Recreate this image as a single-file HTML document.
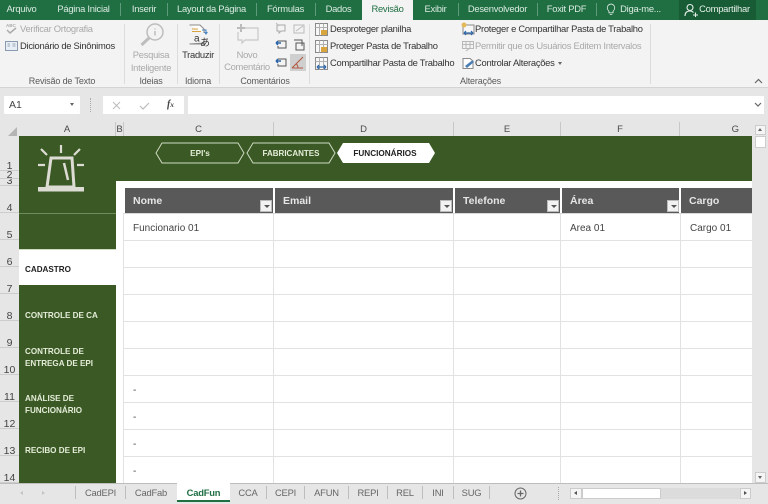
<!DOCTYPE html>
<html><head><meta charset="utf-8">
<style>
html,body{margin:0;padding:0;width:768px;height:504px;overflow:hidden;background:#e6e6e6;font-family:"Liberation Sans",sans-serif}
.a{position:absolute;white-space:nowrap}
.t{position:absolute;top:0;height:20px;line-height:18px;font-size:9.4px;letter-spacing:-.25px;color:#dcebe2;text-align:center;white-space:nowrap}
.sep{position:absolute;top:3px;height:13px;width:1px;background:#5f9a7a}
.r{position:absolute;font-size:9.4px;letter-spacing:-.27px;color:#333;white-space:nowrap;line-height:12px}
.g{color:#a9a9a9}
.lbl{position:absolute;top:75px;font-size:9px;letter-spacing:-.15px;color:#5a5a5a;white-space:nowrap;text-align:center;line-height:12px}
.vs{position:absolute;top:24px;height:60px;width:1px;background:#dcdcdc}
.ch{position:absolute;top:122px;height:14px;line-height:15px;font-size:9.5px;color:#4a4a4a;text-align:center;border-right:1px solid #c8c8c8;box-sizing:border-box}
.rh{position:absolute;left:0;width:19px;font-size:10.5px;color:#444;text-align:center;border-bottom:1px solid #cdcdcd;box-sizing:border-box}
.hl{position:absolute;left:124px;width:628px;height:1px;background:#e2e2e2}
.vl{position:absolute;top:213px;height:270px;width:1px;background:#e2e2e2}
.hd{position:absolute;top:188px;height:25px;background:#595959;color:#e6e6e6;font:bold 10.5px/26px "Liberation Sans",sans-serif;box-sizing:border-box;padding-left:8px;white-space:nowrap;overflow:hidden}
.fb{position:absolute;top:200px;width:12px;height:12px;background:#f2f2f2;border:1px solid #bbb;box-sizing:border-box}
.fb:after{content:"";position:absolute;left:2.5px;top:4px;border:3px solid transparent;border-top:3.5px solid #555;border-bottom:0}
.cell{position:absolute;font:10px/14px "Liberation Sans",sans-serif;color:#444;white-space:nowrap}
.m{position:absolute;left:25px;font:bold 8.1px/12px "Liberation Sans",sans-serif;color:#e4ecd8;white-space:nowrap}
.st{position:absolute;top:483px;height:19px;line-height:20px;font-size:9.4px;letter-spacing:-.2px;color:#666;text-align:center;white-space:nowrap}
.ss{position:absolute;top:486px;height:13px;width:1px;background:#bdbdbd}
</style></head><body>
<div style="position:relative;width:768px;height:504px;overflow:hidden">

<!-- top tabs -->
<div class="a" style="left:0;top:0;width:768px;height:20px;background:#1f6f43"></div>
<div class="t" style="left:0;width:43px">Arquivo</div>
<div class="t" style="left:50px;width:67px">Página Inicial</div><div class="sep" style="left:120px"></div>
<div class="t" style="left:121px;width:46px">Inserir</div><div class="sep" style="left:167px"></div>
<div class="t" style="left:167px;width:89px">Layout da Página</div><div class="sep" style="left:256px"></div>
<div class="t" style="left:256px;width:59px">Fórmulas</div><div class="sep" style="left:315px"></div>
<div class="t" style="left:315px;width:47px">Dados</div>
<div class="a" style="left:362px;top:0;width:51px;height:20px;background:#f3f3f3"></div>
<div class="t" style="left:362px;width:51px;color:#1f6f43">Revisão</div>
<div class="t" style="left:413px;width:45px">Exibir</div><div class="sep" style="left:458px"></div>
<div class="t" style="left:458px;width:79px">Desenvolvedor</div><div class="sep" style="left:537px"></div>
<div class="t" style="left:537px;width:59px">Foxit PDF</div><div class="sep" style="left:596px"></div>
<svg class="a" style="left:606px;top:3px" width="10" height="13" viewBox="0 0 12 14" fill="none" stroke="#dcebe2"><path d="M3.500 9C2 7.500 1.500 6.500 1.500 5A4.500 4.500 0 0 1 10.500 5C10.500 6.500 10 7.500 8.500 9V11H3.500ZM4.500 13H7.500"/></svg>
<div class="t" style="left:619px;width:43px">Diga-me...</div>
<div class="a" style="left:679px;top:0;width:77px;height:20px;background:#185c36"></div>
<svg class="a" style="left:684px;top:3px" width="14" height="14" viewBox="0 0 14 14" fill="none" stroke="#e6f0ea" stroke-width="1.100"><circle cx="6" cy="4.500" r="3"/><path d="M1 13C1 9.500 3 8 6 8C7.500 8 8.500 8.500 9.500 9.500M9 12H14M11.500 9.500V14"/></svg>
<div class="t" style="left:697px;width:55px;color:#e6f0ea">Compartilhar</div>

<!-- ribbon -->
<div class="a" style="left:0;top:20px;width:768px;height:68px;background:#f3f3f3;border-bottom:1px solid #d4d4d4;box-sizing:border-box"></div>

<svg class="a" style="left:5px;top:22px" width="14" height="14" viewBox="0 0 14 14" fill="none"><text x="1" y="5" font-size="4.500" font-family="Liberation Sans" font-weight="bold" fill="#aaa">ABC</text><path d="M2 8L5 11L11 6" stroke="#aaa" stroke-width="1.500"/></svg>
<div class="r g" style="left:20px;top:23px">Verificar Ortografia</div>
<svg class="a" style="left:5px;top:40px" width="13" height="12" viewBox="0 0 13 12" fill="#e8eef5" stroke="#8a9bb0"><rect x=".5" y="1.500" width="12" height="9"/><path d="M2.500 4H5M2.500 6H5M7.500 4H10.500M7.500 6H10.500" stroke="#9aa8b8"/></svg>
<div class="r" style="left:20px;top:40px">Dicionário de Sinônimos</div>
<div class="lbl" style="left:0;width:124px">Revisão de Texto</div>
<div class="vs" style="left:124px"></div>

<svg class="a" style="left:139px;top:23px" width="26" height="24" viewBox="0 0 26 24" fill="none" stroke="#bdbdbd"><circle cx="16" cy="9" r="8" stroke-width="1.500"/><path d="M10 15L2.500 22" stroke-width="3"/><path d="M16 5.500V6.500M16 8V12.500" stroke-width="1.500"/></svg>
<div class="r g" style="left:126px;top:49px;width:50px;text-align:center;line-height:12.500px;white-space:normal">Pesquisa Inteligente</div>
<div class="lbl" style="left:125px;width:52px">Ideias</div>
<div class="vs" style="left:177px"></div>

<svg class="a" style="left:188px;top:24px" width="24" height="24" viewBox="0 0 24 24" fill="none"><path d="M1.500 1H12L16 5V9M16 19V20H1.500Z" fill="#fff" stroke="#8a8a8a"/><path d="M4 5H10M4 7.500H13" stroke="#d8a440"/><path d="M14 6H18V9M16.500 8L18 10L19.500 8" stroke="#3f7fbf"/><text x="6" y="17.500" font-size="10" font-family="Liberation Sans" fill="#333">a</text><text x="12" y="22" font-size="10" font-family="Noto Sans CJK JP" fill="#333">あ</text></svg>
<div class="r" style="left:178px;top:47px;width:40px;text-align:center;line-height:16px">Traduzir</div>
<div class="lbl" style="left:178px;width:40px">Idioma</div>
<div class="vs" style="left:219px"></div>

<svg class="a" style="left:235px;top:23px" width="24" height="24" viewBox="0 0 24 24" fill="none" stroke="#c8c8c8" stroke-width="1.200"><path d="M6 5H23V17H10L7 20V17H3V9"/><path d="M6 1V9M2 5H10" stroke="#bbb" stroke-width="2"/></svg>
<div class="r g" style="left:222px;top:49px;width:50px;text-align:center;line-height:12px;white-space:normal">Novo Comentário</div>
<svg class="a" style="left:275px;top:22px" width="34" height="52" viewBox="0 0 34 52" fill="none" stroke-width="1">
<path d="M2 3H10V9H6L4 11V9H2Z" stroke="#aaa"/><path d="M1 1L4 4" stroke="#bbb"/><path d="M19 3H29V11H19Z" stroke="#bbb"/><path d="M21 9L28 4" stroke="#bbb"/>
<path d="M3 19H11V26H3V24" stroke="#555"/><path d="M1 21H6M1 21L3 19M1 21L3 23" stroke="#2a66a8" stroke-width="1.400"/><path d="M19 18H27V24M21 21H29V28H21Z" stroke="#555"/>
<path d="M3 37H11V44H3V42" stroke="#555"/><path d="M1 39H6M1 39L3 37M1 39L3 41" stroke="#2a66a8" stroke-width="1.400"/>
</svg>
<div class="a" style="left:290px;top:54px;width:16px;height:17px;background:#cfcfcf"></div>
<svg class="a" style="left:291px;top:55px" width="14" height="15" viewBox="0 0 14 15" fill="none" stroke="#b05a40"><path d="M1 13L12 2M1 13H12M7 13C7 11 6 9.500 5 8.500" stroke-width="1.100"/></svg>
<div class="lbl" style="left:222px;width:86px">Comentários</div>
<div class="vs" style="left:309px"></div>

<svg class="a" style="left:315px;top:23px" width="13" height="13" viewBox="0 0 13 13"><rect x=".5" y=".5" width="12" height="12" fill="#f7f7f7" stroke="#8a8a8a"/><path d="M.5 4.500H12.500M4.500.5V12.500M8.500.5V12.500" stroke="#b0b0b0"/><rect x="6" y="7" width="6" height="5" fill="#d9a53e"/></svg>
<div class="r" style="left:330px;top:23px">Desproteger planilha</div>
<svg class="a" style="left:315px;top:40px" width="13" height="13" viewBox="0 0 13 13"><rect x=".5" y=".5" width="12" height="12" fill="#f7f7f7" stroke="#8a8a8a"/><path d="M.5 4.500H12.500M4.500.5V12.500M8.500.5V12.500" stroke="#b0b0b0"/><rect x="6" y="7" width="6" height="5" fill="#d9a53e"/></svg>
<div class="r" style="left:330px;top:40px">Proteger Pasta de Trabalho</div>
<svg class="a" style="left:315px;top:57px" width="13" height="13" viewBox="0 0 13 13" fill="none"><rect x=".5" y=".5" width="12" height="12" fill="#f7f7f7" stroke="#8a8a8a"/><path d="M.5 4.500H12.500M4.500.5V12.500M8.500.5V12.500" stroke="#b0b0b0"/><path d="M2 10H11M2 10L4 8M2 10L4 12M11 10L9 8M11 10L9 12" stroke="#2a66a8" stroke-width="1.200"/></svg>
<div class="r" style="left:330px;top:57px">Compartilhar Pasta de Trabalho</div>

<svg class="a" style="left:461px;top:22px" width="14" height="14" viewBox="0 0 14 14" fill="none"><rect x="2" y="3" width="11" height="9" fill="#f7f7f7" stroke="#8a8a8a"/><circle cx="3" cy="3" r="2.500" fill="#e3b95a"/><path d="M3 11H12M3 11L5 9M3 11L5 13M12 11L10 9M12 11L10 13" stroke="#2a66a8" stroke-width="1.200"/></svg>
<div class="r" style="left:475px;top:23px">Proteger e Compartilhar Pasta de Trabalho</div>
<svg class="a" style="left:461px;top:40px" width="14" height="13" viewBox="0 0 14 13" fill="none" stroke="#b8b8b8"><rect x="1.500" y="1.500" width="11" height="7"/><path d="M1.500 4.500H12.500M5 1.500V8.500M9 1.500V8.500M5 11L9 8"/></svg>
<div class="r g" style="left:475px;top:40px">Permitir que os Usuários Editem Intervalos</div>
<svg class="a" style="left:461px;top:57px" width="14" height="13" viewBox="0 0 14 13" fill="none"><path d="M2 1.500H9L12 4V11.500H2Z" fill="#fff" stroke="#8a8a8a"/><path d="M4 9L11 3.500L13 5L6 11Z" fill="#4a7fb5"/></svg>
<div class="r" style="left:475px;top:57px">Controlar Alterações</div>
<div class="a" style="left:558px;top:62px;border:2.500px solid transparent;border-top:3px solid #666;border-bottom:0"></div>
<div class="lbl" style="left:460px;width:40px">Alterações</div>
<div class="vs" style="left:650px"></div>
<svg class="a" style="left:754px;top:78px" width="9" height="6" viewBox="0 0 9 6" fill="none" stroke="#666" stroke-width="1.200"><path d="M1 5L4.500 1.500L8 5"/></svg>

<!-- formula bar -->
<div class="a" style="left:0;top:88px;width:768px;height:34px;background:#e6e6e6"></div>
<div class="a" style="left:4px;top:96px;width:76px;height:18px;background:#fff;border-radius:1px"></div>
<div class="a" style="left:9px;top:96px;font:10.500px/19px 'Liberation Sans',sans-serif;color:#444">A1</div>
<div class="a" style="left:70px;top:103px;border:2.500px solid transparent;border-top:3px solid #666;border-bottom:0"></div>
<div class="a" style="left:90px;top:98px;width:2px;height:14px;border-left:1px dotted #aaa"></div>
<div class="a" style="left:103px;top:96px;width:81px;height:18px;background:#fff"></div>
<svg class="a" style="left:112px;top:100px" width="62" height="12" viewBox="0 0 62 12" fill="none"><path d="M1 2L8 9M8 2L1 9" stroke="#bbb"/><path d="M28 6L31 9L37 3" stroke="#bbb" stroke-width="1.200"/></svg>
<div class="a" style="left:167px;top:97px;font:italic bold 10px/16px 'Liberation Serif',serif;color:#444">f<span style="font-size:7px">x</span></div>
<div class="a" style="left:188px;top:96px;width:576px;height:18px;background:#fff"></div>
<svg class="a" style="left:754px;top:102px" width="8" height="6" viewBox="0 0 8 6" fill="none" stroke="#666" stroke-width="1.200"><path d="M1 1L4 4L7 1"/></svg>

<!-- column headers -->
<div class="a" style="left:0;top:122px;width:752px;height:14px;background:#e6e6e6"></div>
<div class="a" style="left:8px;top:127px;border-left:9px solid transparent;border-bottom:9px solid #b4b4b4"></div>
<div class="ch" style="left:19px;width:97px">A</div>
<div class="ch" style="left:116px;width:8px">B</div>
<div class="ch" style="left:124px;width:150px">C</div>
<div class="ch" style="left:274px;width:180px">D</div>
<div class="ch" style="left:454px;width:107px">E</div>
<div class="ch" style="left:561px;width:119px">F</div>
<div class="ch" style="left:680px;width:72px;text-align:right;padding-right:13px;border:0">G</div>

<!-- row headers -->
<div class="a" style="left:0;top:136px;width:19px;height:347px;background:#e6e6e6"></div>
<div class="rh" style="top:136px;height:35px;line-height:60px">1</div>
<div class="rh" style="top:171px;height:8px;line-height:8px">2</div>
<div class="rh" style="top:179px;height:7px;line-height:5px;overflow:hidden">3</div>
<div class="rh" style="top:186px;height:27px;line-height:45px">4</div>
<div class="rh" style="top:213px;height:27px;line-height:44px">5</div>
<div class="rh" style="top:240px;height:27px;line-height:44px">6</div>
<div class="rh" style="top:267px;height:27px;line-height:44px">7</div>
<div class="rh" style="top:294px;height:27px;line-height:44px">8</div>
<div class="rh" style="top:321px;height:27px;line-height:44px">9</div>
<div class="rh" style="top:348px;height:27px;line-height:44px">10</div>
<div class="rh" style="top:375px;height:27px;line-height:44px">11</div>
<div class="rh" style="top:402px;height:27px;line-height:44px">12</div>
<div class="rh" style="top:429px;height:27px;line-height:44px">13</div>
<div class="rh" style="top:456px;height:27px;line-height:44px">14</div>

<!-- sheet -->
<div class="a" style="left:19px;top:136px;width:733px;height:347px;background:#fff"></div>
<div class="a" style="left:19px;top:136px;width:733px;height:45px;background:#3a5924"></div>
<div class="a" style="left:19px;top:136px;width:97px;height:347px;background:#3a5924"></div>
<div class="a" style="left:19px;top:213px;width:97px;height:1px;background:#6f8a5c"></div>
<div class="a" style="left:19px;top:250px;width:97px;height:35px;background:#fff"></div>
<div class="a" style="left:19px;top:249px;width:97px;height:1px;background:#cfdcc0"></div>

<!-- grid -->
<div class="hl" style="top:240px"></div><div class="hl" style="top:267px"></div><div class="hl" style="top:294px"></div><div class="hl" style="top:321px"></div><div class="hl" style="top:348px"></div><div class="hl" style="top:375px"></div><div class="hl" style="top:402px"></div><div class="hl" style="top:429px"></div><div class="hl" style="top:456px"></div>
<div class="vl" style="left:123px"></div><div class="vl" style="left:273px"></div><div class="vl" style="left:453px"></div><div class="vl" style="left:560px"></div><div class="vl" style="left:680px"></div>

<!-- table header -->
<div class="hd" style="left:125px;width:148px">Nome</div><div class="fb" style="left:260px"></div>
<div class="hd" style="left:275px;width:178px">Email</div><div class="fb" style="left:440px"></div>
<div class="hd" style="left:455px;width:105px">Telefone</div><div class="fb" style="left:547px"></div>
<div class="hd" style="left:562px;width:117px">Área</div><div class="fb" style="left:667px"></div>
<div class="hd" style="left:681px;width:71px">Cargo</div>
<div class="a" style="left:124px;top:213px;width:628px;height:1px;background:#d8d8d8"></div>

<div class="cell" style="left:133px;top:222px">Funcionario 01</div>
<div class="cell" style="left:570px;top:222px">Area 01</div>
<div class="cell" style="left:690px;top:222px">Cargo 01</div>
<div class="cell" style="left:133px;top:384px">-</div>
<div class="cell" style="left:133px;top:411px">-</div>
<div class="cell" style="left:133px;top:438px">-</div>
<div class="cell" style="left:133px;top:465px">-</div>

<!-- sidebar -->
<svg class="a" style="left:37px;top:144px" width="48" height="48" viewBox="0 0 48 48" fill="none" stroke="#dcdcd4"><path d="M24 1V9M4 5L10 11M43 5L37 11M1 21H8M40 21H47" stroke-width="2.200"/><path d="M14 14H35L37 43H10Z" stroke-width="3"/><path d="M27 19L31 36" stroke-width="2.500"/><rect x="1" y="43" width="46" height="4.500" fill="#dcdcd4" stroke="none"/></svg>
<div class="m" style="left:25px;top:264px;color:#222">CADASTRO</div>
<div class="m" style="top:310px">CONTROLE DE CA</div>
<div class="m" style="top:346px">CONTROLE DE</div>
<div class="m" style="top:358px">ENTREGA DE EPI</div>
<div class="m" style="top:393px">ANÁLISE DE</div>
<div class="m" style="top:405px">FUNCIONÁRIO</div>
<div class="m" style="top:445px">RECIBO DE EPI</div>

<!-- chevron buttons -->
<svg class="a" style="left:150px;top:138px" width="290" height="30" viewBox="0 0 290 30">
<path d="M6 15L12 5H88L94 15L88 25H12Z" fill="none" stroke="#cfdac4"/>
<path d="M97 15L103 5H179L185 15L179 25H103Z" fill="none" stroke="#cfdac4"/>
<path d="M187 15L193 5H279L285 15L279 25H193Z" fill="#fff"/>
<text x="50" y="18" font-size="8.200" font-weight="bold" font-family="Liberation Sans" fill="#e6edda" text-anchor="middle">EPI's</text>
<text x="141" y="18" font-size="8" font-weight="bold" font-family="Liberation Sans" fill="#e6edda" text-anchor="middle">FABRICANTES</text>
<text x="235" y="18" font-size="8.200" font-weight="bold" font-family="Liberation Sans" fill="#222" text-anchor="middle">FUNCIONÁRIOS</text>
</svg>

<!-- vertical scrollbar -->
<div class="a" style="left:752px;top:122px;width:16px;height:361px;background:#e6e6e6"></div>
<div class="a" style="left:755px;top:125px;width:11px;height:10px;background:#f5f5f5;border:1px solid #ccc;box-sizing:border-box"></div>
<div class="a" style="left:758px;top:128px;border:2.500px solid transparent;border-bottom:3px solid #666;border-top:0"></div>
<div class="a" style="left:755px;top:136px;width:11px;height:12px;background:#fff;border:1px solid #ccc;box-sizing:border-box"></div>
<div class="a" style="left:755px;top:472px;width:11px;height:11px;background:#f5f5f5;border:1px solid #ccc;box-sizing:border-box"></div>
<div class="a" style="left:758px;top:476px;border:2.500px solid transparent;border-top:3px solid #666;border-bottom:0"></div>

<!-- bottom bar -->
<div class="a" style="left:0;top:483px;width:768px;height:21px;background:#e6e6e6;border-top:1px solid #bdbdbd;box-sizing:border-box"></div>
<div class="a" style="left:20px;top:491px;border:2.500px solid transparent;border-right:3px solid #c4c4c4;border-left:0"></div>
<div class="a" style="left:42px;top:491px;border:2.500px solid transparent;border-left:3px solid #c4c4c4;border-right:0"></div>
<div class="ss" style="left:75px"></div><div class="st" style="left:76px;width:49px">CadEPI</div>
<div class="ss" style="left:125px"></div><div class="st" style="left:126px;width:50px">CadFab</div>
<div class="a" style="left:177px;top:483px;width:53px;height:19px;background:#fff;border-bottom:2px solid #1f6f43;box-sizing:border-box"></div>
<div class="st" style="left:177px;width:53px;font-weight:bold;color:#1f6f43">CadFun</div>
<div class="st" style="left:230px;width:36px">CCA</div><div class="ss" style="left:266px"></div>
<div class="st" style="left:267px;width:37px">CEPI</div><div class="ss" style="left:304px"></div>
<div class="st" style="left:305px;width:43px">AFUN</div><div class="ss" style="left:348px"></div>
<div class="st" style="left:349px;width:38px">REPI</div><div class="ss" style="left:387px"></div>
<div class="st" style="left:388px;width:34px">REL</div><div class="ss" style="left:422px"></div>
<div class="st" style="left:423px;width:30px">INI</div><div class="ss" style="left:453px"></div>
<div class="st" style="left:454px;width:35px">SUG</div><div class="ss" style="left:489px"></div>
<svg class="a" style="left:514px;top:487px" width="13" height="13" viewBox="0 0 13 13" fill="none" stroke="#666"><circle cx="6.500" cy="6.500" r="5.500"/><path d="M3.500 6.500H9.500M6.500 3.500V9.500" stroke-width="1.300"/></svg>
<div class="a" style="left:558px;top:487px;height:13px;width:1px;border-left:1px dotted #aaa"></div>
<div class="a" style="left:570px;top:488px;width:180px;height:11px;background:#dcdcdc"></div>
<div class="a" style="left:570px;top:488px;width:12px;height:11px;background:#f5f5f5;border:1px solid #ccc;box-sizing:border-box"></div>
<div class="a" style="left:574px;top:491px;border:2.500px solid transparent;border-right:3px solid #555;border-left:0"></div>
<div class="a" style="left:582px;top:488px;width:79px;height:11px;background:#fff;border:1px solid #ccc;box-sizing:border-box"></div>
<div class="a" style="left:740px;top:488px;width:11px;height:11px;background:#f5f5f5;border:1px solid #ccc;box-sizing:border-box"></div>
<div class="a" style="left:744px;top:491px;border:2.500px solid transparent;border-left:3px solid #555;border-right:0"></div>
</div>
</body></html>
